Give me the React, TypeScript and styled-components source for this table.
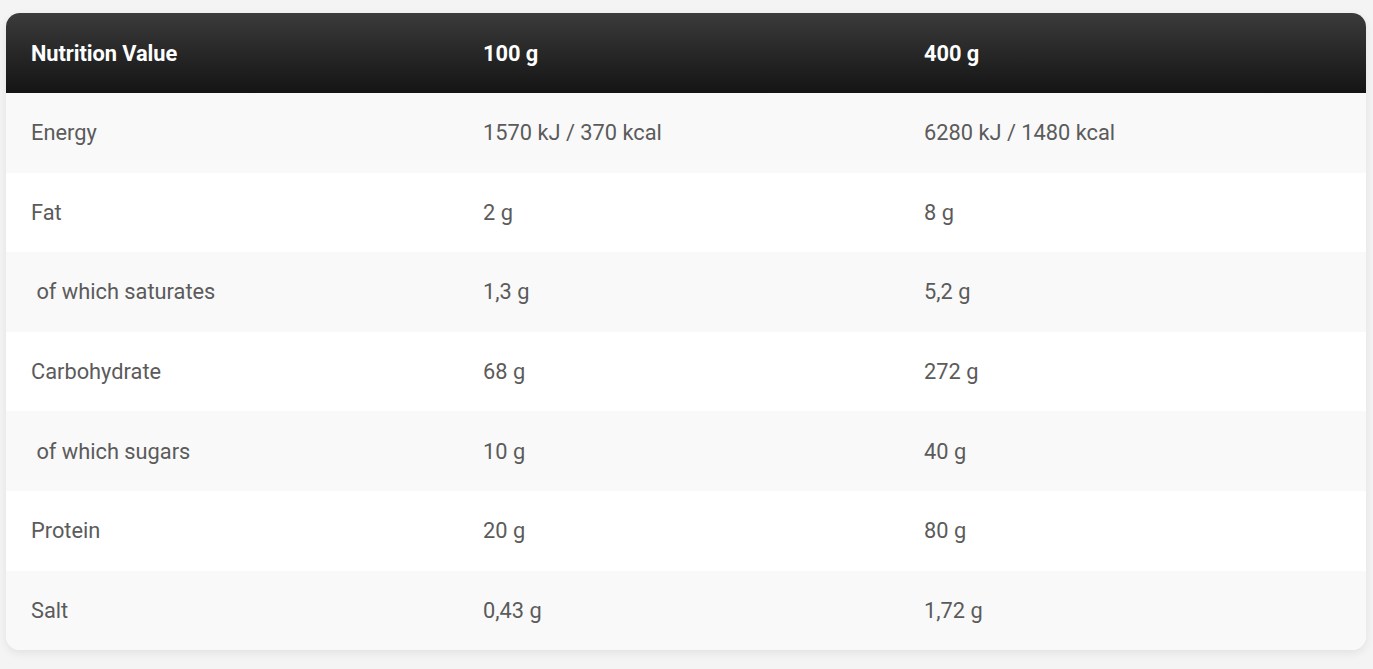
import React from 'react'
import styled, { createGlobalStyle } from 'styled-components'

const GlobalStyle = createGlobalStyle`
  html, body {
    margin: 0;
    padding: 0;
    background: #f4f4f4;
  }
  body {
    font-family: 'Roboto', 'Liberation Sans', sans-serif;
  }
`

const rows: [string, string, string][] = [
  ['Energy', '1570 kJ / 370 kcal', '6280 kJ / 1480 kcal'],
  ['Fat', '2 g', '8 g'],
  [' of which saturates', '1,3 g', '5,2 g'],
  ['Carbohydrate', '68 g', '272 g'],
  [' of which sugars', '10 g', '40 g'],
  ['Protein', '20 g', '80 g'],
  ['Salt', '0,43 g', '1,72 g'],
]

const NutritionTable = () => {
  return (
    <Page>
      <GlobalStyle />
      <Card>
        <HeaderRow>
          <HeadCell>Nutrition Value</HeadCell>
          <HeadCell>100 g</HeadCell>
          <HeadCell>400 g</HeadCell>
        </HeaderRow>
        {rows.map((r, i) => (
          <Row key={r[0]} $striped={i % 2 === 0}>
            {r.map((c, j) => (
              <Cell key={j}>{c}</Cell>
            ))}
          </Row>
        ))}
      </Card>
    </Page>
  )
}

const Page = styled.div`
  padding: 13px 7px 19px 6px;
`

const Card = styled.div`
  border-radius: 14px;
  overflow: hidden;
  background: #fff;
  box-shadow: 0 3px 10px rgba(0, 0, 0, 0.08);
`

const HeaderRow = styled.div`
  display: grid;
  grid-template-columns: 452px 441px 1fr;
  height: 80px;
  align-items: center;
  background: linear-gradient(to bottom, #3b3b3b 0%, #141414 100%);
`

const HeadCell = styled.div`
  padding-left: 25px;
  color: #ffffff;
  font-size: 21.8px;
  font-weight: 700;
  letter-spacing: -0.05px;
`

const Row = styled.div<{ $striped: boolean }>`
  display: grid;
  grid-template-columns: 452px 441px 1fr;
  height: 79.6px;
  align-items: center;
  background: ${(p) => (p.$striped ? '#f9f9f9' : '#ffffff')};
`

const Cell = styled.div`
  padding-left: 25px;
  color: #5b5b5b;
  font-size: 21.8px;
  white-space: pre;
`

export default NutritionTable
